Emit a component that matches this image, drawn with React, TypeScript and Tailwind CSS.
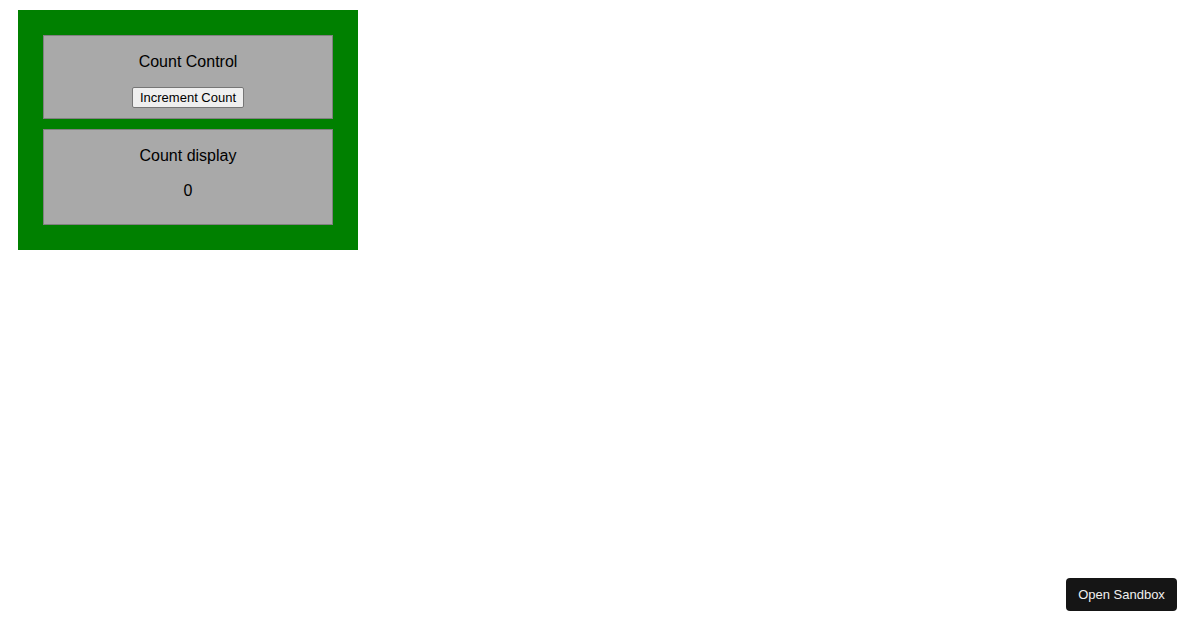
import React, { useState } from 'react';

export default function App() {
  const [count, setCount] = useState(0);

  return (
    <div className="relative w-full h-[630px] bg-white font-['Liberation_Sans',Arial,sans-serif] text-black">
      <div className="pt-[10px] pl-[18px]">
        <div className="w-[340px] bg-[#008000] p-[25px] flex flex-col gap-[10px]">
          <div className="border border-[#808080] bg-[#a9a9a9] h-[84px] flex flex-col items-center pt-[17px]">
            <p className="text-[16px] leading-[18px]">Count Control</p>
            <button
              onClick={() => setCount(count + 1)}
              className="mt-[16px] h-[21px] px-[7px] text-[13px] leading-[15px] bg-[#efefef] border border-[#767676] rounded-[2px]"
            >
              Increment Count
            </button>
          </div>
          <div className="border border-[#808080] bg-[#a9a9a9] h-[96px] flex flex-col items-center pt-[17px]">
            <p className="text-[16px] leading-[18px]">Count display</p>
            <p className="mt-[17px] text-[16px] leading-[18px]">{count}</p>
          </div>
        </div>
      </div>

      <button className="absolute right-[23px] bottom-[19px] w-[111px] h-[33px] rounded-[4px] bg-[#151515] text-[#f0f0f0] text-[13px]">
        Open Sandbox
      </button>
    </div>
  );
}
